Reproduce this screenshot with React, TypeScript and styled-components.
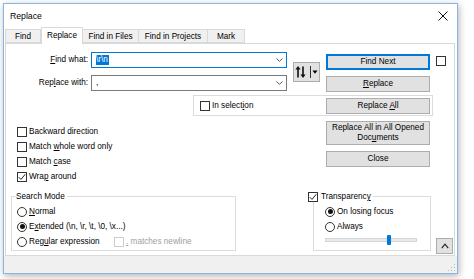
import React from 'react';
import styled, { createGlobalStyle } from 'styled-components';

const GlobalStyle = createGlobalStyle`
  html, body { margin: 0; padding: 0; background: #fff; }
  body {
    font-family: "Liberation Sans", Arial, sans-serif;
    font-size: 8.2px;
    color: #000;
  }
  * { box-sizing: border-box; }
`;

const Page = styled.div`
  width: 474px;
  height: 279px;
  overflow: hidden;
  padding: 3px 0 0 3px;
  background: #fff;
`;

const Window = styled.div`
  width: 455px;
  height: 271px;
  border: 1px solid #86b5e6;
  background: #fff;
  box-shadow: 1px 2px 7px rgba(0, 0, 0, 0.3);
  display: flex;
  flex-direction: column;
`;

const TitleBar = styled.div`
  height: 23px;
  flex: none;
  display: flex;
  align-items: center;
  justify-content: space-between;
  padding: 1px 9px 0 6px;
  font-size: 8.7px;
`;

const TabStrip = styled.div`
  height: 16px;
  flex: none;
  display: flex;
  align-items: flex-end;
  padding-left: 1px;
`;

const Tab = styled.div<{ $w: number; $active?: boolean }>`
  width: ${(p) => p.$w}px;
  height: ${(p) => (p.$active ? 17 : 14)}px;
  margin-bottom: ${(p) => (p.$active ? -1 : 0)}px;
  position: relative;
  z-index: ${(p) => (p.$active ? 2 : 0)};
  border: 1px solid #d9d9d9;
  border-bottom: ${(p) => (p.$active ? 'none' : '1px solid #d9d9d9')};
  border-left: ${(p) => (p.$active ? '1px solid #d9d9d9' : 'none')};
  background: ${(p) => (p.$active ? '#fff' : '#f0f0f0')};
  display: flex;
  align-items: center;
  justify-content: center;
  padding-bottom: ${(p) => (p.$active ? 2 : 0)}px;
  white-space: nowrap;
  &:first-child {
    border-left: 1px solid #d9d9d9;
  }
`;

const Panel = styled.div`
  flex: none;
  height: 213px;
  margin: 0 2px 0 1px;
  border: 1px solid #d9d9d9;
  background: #fff;
  padding-top: 8px;
  display: flex;
  flex-direction: column;
  position: relative;
  z-index: 1;
`;

const TopGrid = styled.div`
  display: grid;
  grid-template-columns: 85px 102px 94px 39px 104px 3px 21px;
  grid-template-rows: 21px 22px 23px auto;
`;

const FieldLabel = styled.label<{ $row: number; $mt?: number }>`
  grid-row: ${(p) => p.$row};
  grid-column: 1;
  margin-top: ${(p) => p.$mt ?? 0}px;
  height: 16px;
  line-height: 16px;
  text-align: right;
  padding-right: 3px;
  white-space: nowrap;
`;

const Combo = styled.div<{ $row: number; $mt?: number; $focused?: boolean }>`
  grid-row: ${(p) => p.$row};
  grid-column: 2 / 4;
  margin-top: ${(p) => p.$mt ?? 0}px;
  height: 16px;
  border: 1px solid ${(p) => (p.$focused ? '#0078d7' : '#7a7a7a')};
  background: #fff;
  display: flex;
  align-items: center;
  padding: 0 3px 0 4px;
`;

const ComboText = styled.div`
  flex: 1;
  line-height: 10px;
  white-space: nowrap;
`;

const Selected = styled.span`
  background: #0078d7;
  color: #fff;
  padding: 0 1px 0 0;
  display: inline-block;
  line-height: 10px;
`;

const Button = styled.button<{ $row?: number; $mt?: number; $h?: number; $default?: boolean }>`
  grid-row: ${(p) => p.$row ?? 'auto'};
  grid-column: 5;
  margin: ${(p) => p.$mt ?? 0}px 0 0 0;
  height: ${(p) => p.$h ?? 16}px;
  width: 104px;
  padding: 0;
  font: inherit;
  color: #000;
  line-height: 10.5px;
  background: #e1e1e1;
  border: ${(p) => (p.$default ? '2px solid #0078d7' : '1px solid #adadad')};
  position: relative;
  z-index: 2;
  text-align: center;
`;

const SwapButton = styled.div`
  grid-row: 1 / 3;
  grid-column: 4;
  margin: 10px 0 0 6px;
  width: 27px;
  height: 20px;
  background: #e1e1e1;
  border: 1px solid #adadad;
  display: flex;
`;

const SideCheck = styled.div`
  grid-row: 1;
  grid-column: 7;
  margin: 4px 0 0 3px;
`;

const SelectionBox = styled.div`
  grid-row: 3;
  grid-column: 3 / 7;
  height: 21px;
  border: 1px solid #dcdcdc;
  display: flex;
  align-items: center;
  padding-left: 6px;
  z-index: 1;
`;

const OptionList = styled.div`
  grid-row: 4;
  grid-column: 1 / 5;
  margin-top: 6px;
  padding-left: 11px;
  display: flex;
  flex-direction: column;
`;

const RightStack = styled.div`
  grid-row: 4;
  grid-column: 5;
  margin-top: 3px;
  display: flex;
  flex-direction: column;
  gap: 6px;
`;

const OptionRow = styled.div<{ $disabled?: boolean }>`
  height: 15px;
  display: flex;
  align-items: center;
  gap: 2px;
  white-space: nowrap;
  color: ${(p) => (p.$disabled ? '#a0a0a0' : '#000')};
`;

const Box = styled.span<{ $disabled?: boolean }>`
  width: 10px;
  height: 10px;
  flex: none;
  border: 1px solid ${(p) => (p.$disabled ? '#cccccc' : '#333')};
  background: #fff;
  display: inline-flex;
  align-items: center;
  justify-content: center;
`;

const Circle = styled.span`
  width: 10px;
  height: 10px;
  flex: none;
  border: 1px solid #333;
  border-radius: 50%;
  background: #fff;
  display: inline-flex;
  align-items: center;
  justify-content: center;
`;

const Dot = styled.span`
  width: 5px;
  height: 5px;
  border-radius: 50%;
  background: #111;
`;

const Mn = styled.span`
  text-decoration: underline;
  text-underline-offset: 1px;
`;

const BottomRow = styled.div`
  flex: 1;
  display: flex;
  align-items: flex-start;
  margin-top: 7px;
  padding-left: 5px;
`;

const Group = styled.fieldset<{ $w: number; $ml?: number }>`
  width: ${(p) => p.$w}px;
  height: 60px;
  margin: 0 0 0 ${(p) => p.$ml ?? 0}px;
  padding: 2px 0 0 0;
  border: 1px solid #dcdcdc;
  min-width: 0;
`;

const Legend = styled.legend<{ $ml: number }>`
  margin-left: ${(p) => p.$ml}px;
  padding: 0 2px 0 0;
  line-height: 11px;
  display: flex;
  align-items: center;
  gap: 3px;
  white-space: nowrap;
`;

const GroupBody = styled.div<{ $pl: number }>`
  padding-left: ${(p) => p.$pl}px;
  display: flex;
  flex-direction: column;
`;

const RegexLabel = styled.div`
  width: 95px;
  display: flex;
  align-items: center;
  gap: 2px;
`;

const DisabledOption = styled.span`
  display: flex;
  align-items: center;
  gap: 2px;
  color: #a0a0a0;
`;

const SliderRow = styled.div`
  height: 12px;
  display: flex;
  align-items: center;
`;

const Track = styled.div`
  position: relative;
  width: 92px;
  height: 4px;
  background: #e7eaea;
  border: 1px solid #d6d6d6;
`;

const Thumb = styled.div`
  position: absolute;
  top: -4px;
  width: 4px;
  height: 10px;
  background: #0078d7;
  border-radius: 1px;
`;

const CollapseButton = styled.div`
  align-self: flex-end;
  margin: 0 0 1px 5px;
  width: 17px;
  height: 16px;
  background: #e1e1e1;
  border: 1px solid #adadad;
  display: flex;
  align-items: center;
  justify-content: center;
`;

const BottomStrip = styled.div`
  flex: 1;
  background: #f0f0f0;
  display: flex;
  justify-content: flex-end;
  align-items: flex-end;
  padding: 0 1px 1px 0;
`;

const Check = () => (
  <svg width="8" height="8" viewBox="0 0 8 8">
    <polyline points="0.8,4.2 3,6.4 7.3,1.2" fill="none" stroke="#222" strokeWidth="1" />
  </svg>
);

const CheckBox = ({ checked, disabled }: { checked?: boolean; disabled?: boolean }) => (
  <Box $disabled={disabled}>{checked && <Check />}</Box>
);

const Radio = ({ checked }: { checked?: boolean }) => <Circle>{checked && <Dot />}</Circle>;

const Chevron = () => (
  <svg width="7" height="4" viewBox="0 0 7 4">
    <polyline points="0.5,0.5 3.5,3.3 6.5,0.5" fill="none" stroke="#555" strokeWidth="1" />
  </svg>
);

const CloseIcon = () => (
  <svg width="10" height="10" viewBox="0 0 10 10">
    <path d="M0.5 0.5 L9.5 9.5 M9.5 0.5 L0.5 9.5" stroke="#111" strokeWidth="1" />
  </svg>
);

const SwapIcon = () => (
  <svg width="25" height="18" viewBox="0 0 25 18">
    <path d="M4 3 L1.4 6.6 H3.2 V14.5 H4.8 V6.6 H6.6 Z" fill="#111" />
    <path d="M9 15 L6.4 11.4 H8.2 V3.5 H9.8 V11.4 H11.6 Z" fill="#111" />
    <line x1="16.5" y1="3" x2="16.5" y2="15" stroke="#333" strokeWidth="1" />
    <path d="M18.5 7.5 H23.5 L21 10.8 Z" fill="#000" />
  </svg>
);

const UpIcon = () => (
  <svg width="8" height="6" viewBox="0 0 8 6">
    <polyline points="0.8,5.2 4,1.2 7.2,5.2" fill="none" stroke="#222" strokeWidth="1.1" />
  </svg>
);

const Grip = () => (
  <svg width="9" height="9" viewBox="0 0 9 9">
    {[
      [7, 1],
      [7, 4],
      [4, 4],
      [7, 7],
      [4, 7],
      [1, 7],
    ].map(([x, y]) => (
      <rect key={`${x}-${y}`} x={x} y={y} width="1" height="1" fill="#b8b8b8" />
    ))}
  </svg>
);

const tabs = [
  { label: 'Find', w: 36 },
  { label: 'Replace', w: 42, active: true },
  { label: 'Find in Files', w: 56 },
  { label: 'Find in Projects', w: 69 },
  { label: 'Mark', w: 37 },
];

const sliderValue = 0.69;

export default function App() {
  return (
    <>
      <GlobalStyle />
      <Page>
        <Window>
          <TitleBar>
            <span>Replace</span>
            <CloseIcon />
          </TitleBar>
          <TabStrip>
            {tabs.map((t) => (
              <Tab key={t.label} $w={t.w} $active={t.active}>
                {t.label}
              </Tab>
            ))}
          </TabStrip>
          <Panel>
            <TopGrid>
              <FieldLabel $row={1}>
                <Mn>F</Mn>ind what:
              </FieldLabel>
              <Combo $row={1} $focused>
                <ComboText>
                  <Selected>\r\n</Selected>
                </ComboText>
                <Chevron />
              </Combo>
              <Button $row={1} $mt={2} $default>
                Find Next
              </Button>
              <SideCheck>
                <CheckBox />
              </SideCheck>

              <FieldLabel $row={2} $mt={2}>
                Rep<Mn>l</Mn>ace with:
              </FieldLabel>
              <Combo $row={2} $mt={2}>
                <ComboText>,</ComboText>
                <Chevron />
              </Combo>
              <Button $row={2} $mt={3}>
                <Mn>R</Mn>eplace
              </Button>

              <SwapButton>
                <SwapIcon />
              </SwapButton>

              <SelectionBox>
                <OptionRow>
                  <CheckBox />
                  <span>
                    In select<Mn>i</Mn>on
                  </span>
                </OptionRow>
              </SelectionBox>
              <Button $row={3} $mt={3}>
                Replace <Mn>A</Mn>ll
              </Button>

              <OptionList>
                <OptionRow>
                  <CheckBox />
                  <span>Backward direction</span>
                </OptionRow>
                <OptionRow>
                  <CheckBox />
                  <span>
                    Match <Mn>w</Mn>hole word only
                  </span>
                </OptionRow>
                <OptionRow>
                  <CheckBox />
                  <span>
                    Match <Mn>c</Mn>ase
                  </span>
                </OptionRow>
                <OptionRow>
                  <CheckBox checked />
                  <span>
                    Wra<Mn>p</Mn> around
                  </span>
                </OptionRow>
              </OptionList>

              <RightStack>
                <Button $h={24}>
                  Replace All in All Opened
                  <br />
                  Doc<Mn>u</Mn>ments
                </Button>
                <Button>Close</Button>
              </RightStack>
            </TopGrid>

            <BottomRow>
              <Group $w={225}>
                <Legend $ml={4}>Search Mode</Legend>
                <GroupBody $pl={5}>
                  <OptionRow>
                    <Radio />
                    <span>
                      <Mn>N</Mn>ormal
                    </span>
                  </OptionRow>
                  <OptionRow>
                    <Radio checked />
                    <span>
                      E<Mn>x</Mn>tended (\n, \r, \t, \0, \x...)
                    </span>
                  </OptionRow>
                  <OptionRow>
                    <RegexLabel>
                      <Radio />
                      <span>
                        Reg<Mn>u</Mn>lar expression
                      </span>
                    </RegexLabel>
                    <DisabledOption>
                      <CheckBox disabled />
                      <span>
                        <Mn>.</Mn> matches newline
                      </span>
                    </DisabledOption>
                  </OptionRow>
                </GroupBody>
              </Group>

              <Group $w={118} $ml={77}>
                <Legend $ml={-6}>
                  <CheckBox checked />
                  <span>
                    Transparenc<Mn>y</Mn>
                  </span>
                </Legend>
                <GroupBody $pl={11}>
                  <OptionRow>
                    <Radio checked />
                    <span>On losing focus</span>
                  </OptionRow>
                  <OptionRow>
                    <Radio />
                    <span>Always</span>
                  </OptionRow>
                  <SliderRow>
                    <Track>
                      <Thumb style={{ left: `${sliderValue * 92 - 2}px` }} />
                    </Track>
                  </SliderRow>
                </GroupBody>
              </Group>

              <CollapseButton>
                <UpIcon />
              </CollapseButton>
            </BottomRow>
          </Panel>
          <BottomStrip>
            <Grip />
          </BottomStrip>
        </Window>
      </Page>
    </>
  );
}
